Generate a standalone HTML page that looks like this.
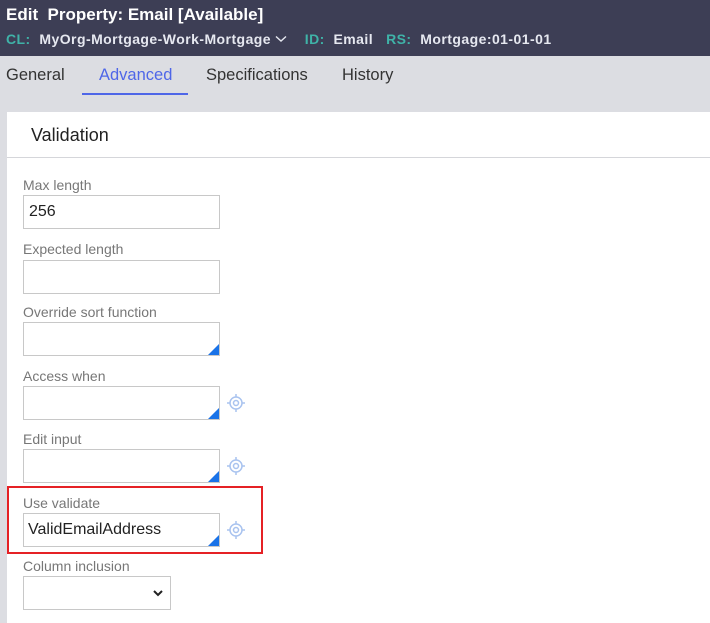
<!DOCTYPE html>
<html><head><style>
body{margin:0;width:710px;height:623px;overflow:hidden;background:#dcdde2;font-family:"Liberation Sans",sans-serif;position:relative}
.hdr{position:absolute;left:0;top:0;width:710px;height:56px;background:#3d3e55;color:#fff}
.t1{position:absolute;left:6px;top:5px;font-size:17px;font-weight:bold}
.t2{position:absolute;left:6px;top:31px;font-size:14px;font-weight:bold;color:#e6e8f0;white-space:nowrap;letter-spacing:0.45px}
.t2 .k{color:#3fb3a8}
.tabs{position:absolute;top:66px;font-size:16.5px;color:#333}
.panel{position:absolute;left:7px;top:112px;width:703px;height:511px;background:#fff}
.vh{position:absolute;left:31px;top:125px;font-size:18px;color:#222}
.line{position:absolute;left:7px;top:157px;width:703px;height:1px;background:#d5d6da}
.lbl{position:absolute;left:23px;font-size:14px;color:#777}
.in{position:absolute;left:23px;width:197px;height:34px;border:1px solid #c8c8c8;box-sizing:border-box;background:#fff;font-size:16px;color:#222;padding:7px 5px}
.tri{position:absolute;right:0;bottom:0;width:0;height:0;border-left:11px solid transparent;border-bottom:11px solid #1a73e8}
.tg{position:absolute;left:226px}
</style></head><body>
<div class="hdr"><div class="t1">Edit&nbsp; Property: Email [Available]</div>
<div class="t2"><span class="k">CL:</span>&nbsp; MyOrg-Mortgage-Work-Mortgage <svg width="12" height="8" viewBox="0 0 12 8" style="vertical-align:1px"><path d="M1 1.5L6 6L11 1.5" stroke="#e6e8f0" stroke-width="1.4" fill="none"/></svg> &nbsp;&nbsp;&nbsp;<span class="k">ID:</span>&nbsp; Email &nbsp;&nbsp;<span class="k">RS:</span>&nbsp; Mortgage:01-01-01</div></div>
<div class="tabs" style="left:6px">General</div>
<div class="tabs" style="left:99px;color:#4e66e8">Advanced</div>
<div style="position:absolute;left:82px;top:93px;width:106px;height:2px;background:#4e66e8"></div>
<div class="tabs" style="left:206px">Specifications</div>
<div class="tabs" style="left:342px">History</div>
<div class="panel"></div>
<div class="vh">Validation</div><div class="line"></div>

<div class="lbl" style="top:177px">Max length</div>
<div class="in" style="top:195px">256</div>
<div class="lbl" style="top:241px">Expected length</div>
<div class="in" style="top:260px"></div>
<div class="lbl" style="top:304px">Override sort function</div>
<div class="in" style="top:322px"><div class="tri"></div></div>
<div class="lbl" style="top:368px">Access when</div>
<div class="in" style="top:386px"><div class="tri"></div></div>
<div class="lbl" style="top:431px">Edit input</div>
<div class="in" style="top:449px"><div class="tri"></div></div>
<div class="lbl" style="top:495px">Use validate</div>
<div class="in" style="top:513px;padding-left:4px">ValidEmailAddress<div class="tri"></div></div>
<div style="position:absolute;left:7px;top:486px;width:256px;height:68px;border:2px solid #e52125;box-sizing:border-box"></div>
<div class="lbl" style="top:558px">Column inclusion</div>
<div class="in" style="top:576px;width:148px"><svg style="position:absolute;right:7px;top:12px" width="10" height="8" viewBox="0 0 10 8"><path d="M1 2L5 6L9 2" stroke="#222" stroke-width="2" fill="none"/></svg></div>

<svg class="tg" style="top:393px" width="20" height="20" viewBox="0 0 20 20"><g stroke="#a9c3ef" stroke-width="1.5" fill="none"><circle cx="10" cy="10" r="6"/><circle cx="10" cy="10" r="2.5"/><path d="M10 1v3M10 16v3M1 10h3M16 10h3"/></g></svg>
<svg class="tg" style="top:456px" width="20" height="20" viewBox="0 0 20 20"><g stroke="#a9c3ef" stroke-width="1.5" fill="none"><circle cx="10" cy="10" r="6"/><circle cx="10" cy="10" r="2.5"/><path d="M10 1v3M10 16v3M1 10h3M16 10h3"/></g></svg>
<svg class="tg" style="top:520px" width="20" height="20" viewBox="0 0 20 20"><g stroke="#a9c3ef" stroke-width="1.5" fill="none"><circle cx="10" cy="10" r="6"/><circle cx="10" cy="10" r="2.5"/><path d="M10 1v3M10 16v3M1 10h3M16 10h3"/></g></svg>
</body></html>
